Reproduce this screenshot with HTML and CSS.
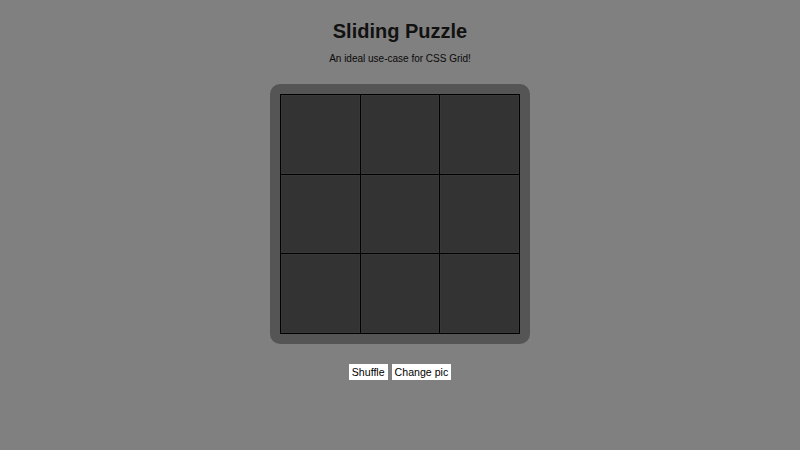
FILE: index.html
```html
<!DOCTYPE html>
<html lang="en">
<head>
    <meta charset="UTF-8">
    <meta name="viewport" content="width=device-width, initial-scale=1.0">
    <title>Sliding Puzzle</title>
    <link rel="stylesheet" href="styles.css">
</head>
<body>
    <h1 class="title">Sliding Puzzle</h1>
    <p class="subtitle">An ideal use-case for CSS Grid!</p>

    <div class="board">
        <div class="grid">
            <div class="tile"></div>
            <div class="tile"></div>
            <div class="tile"></div>
            <div class="tile"></div>
            <div class="tile"></div>
            <div class="tile"></div>
            <div class="tile"></div>
            <div class="tile"></div>
            <div class="tile"></div>
        </div>
    </div>

    <div class="controls">
        <button class="btn">Shuffle</button>
        <button class="btn">Change pic</button>
    </div>
</body>
</html>
```

FILE: styles.css
```css
body {
    font-family: "Liberation Sans", Arial, Helvetica, sans-serif;
    background: #808080;
    color: #111;
    margin: 0;
    display: flex;
    flex-direction: column;
    align-items: center;
}

.title {
    font-size: 20px;
    margin: 20px 0 0;
    line-height: 23px;
}

.subtitle {
    font-size: 10px;
    margin: 10px 0 0;
    line-height: 12px;
    color: #0a0a0a;
}

/* tablero con los 9 cuadros */
.board {
    margin-top: 19px;
    padding: 10px;
    background: #555;
    border-radius: 10px;
}

.grid {
    width: 240px;
    height: 240px;
    box-sizing: border-box;
    display: grid;
    grid-template-columns: repeat(3, 1fr);
    grid-template-rows: repeat(3, 1fr);
    gap: 1px;
    border: 1px solid #000;
    background: #000;
}

.tile {
    background: #333;
    box-shadow: inset 0 0 0 1px #383838;
}

.controls {
    margin-top: 20px;
    display: flex;
    gap: 4px;
}

.btn {
    font-family: "Liberation Sans", Arial, sans-serif;
    font-size: 10.6px;
    line-height: 14px;
    padding: 1px 3px;
    background: #fff;
    color: #000;
    border: none;
    border-radius: 0;
}
```
